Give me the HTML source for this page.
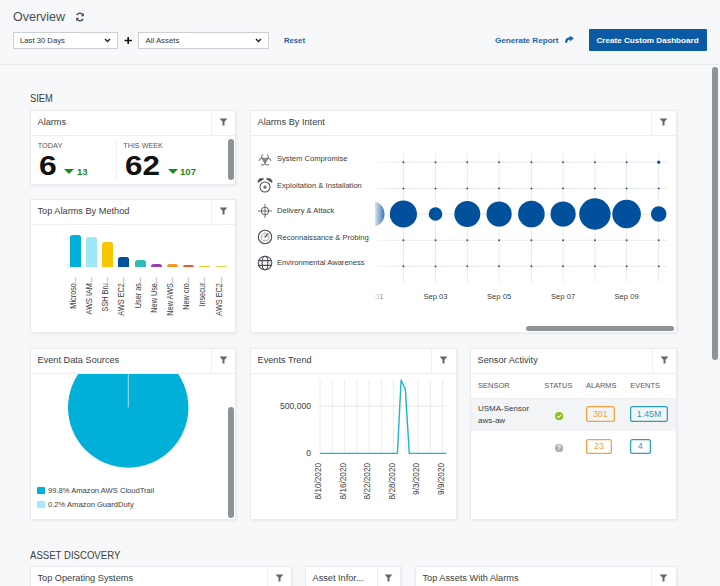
<!DOCTYPE html><html><head><meta charset="utf-8"><style>
html,body{margin:0;padding:0;}
body{width:720px;height:586px;overflow:hidden;position:relative;background:#f7f8fa;font-family:"Liberation Sans",sans-serif;}
.t{position:absolute;white-space:nowrap;line-height:1em;}
svg{display:block}
</style></head><body>
<div style="position:absolute;left:0px;top:64px;width:720px;height:1px;background:#e7e9ec;"></div>
<div class="t" style="left:13px;top:10.97px;font-size:12.5px;font-weight:400;color:#4a4d52;">Overview</div>
<svg style="position:absolute;left:75px;top:12px" width="10" height="10" viewBox="0 0 10 10"><path d="M8.2 3.6 A3.5 3.5 0 0 0 1.8 3.2" fill="none" stroke="#50555b" stroke-width="1.5"/><path d="M8.9 1 V4.2 H5.8 Z" fill="#50555b"/><path d="M1.8 6.4 A3.5 3.5 0 0 0 8.2 6.8" fill="none" stroke="#50555b" stroke-width="1.5"/><path d="M1.1 9 V5.8 H4.2 Z" fill="#50555b"/></svg>
<div style="position:absolute;left:13px;top:32px;width:105px;height:17px;background:#fff;border:1px solid #ccd0d4;box-sizing:border-box;"></div>
<div class="t" style="left:20px;top:36.60px;font-size:7.7px;font-weight:400;color:#333;">Last 30 Days</div>
<div style="position:absolute;left:104px;top:37.8px;line-height:0"><svg width="7" height="5" viewBox="0 0 7 5"><path d="M1 1 L3.5 3.6 L6 1" fill="none" stroke="#222" stroke-width="1.4"/></svg></div>
<svg style="position:absolute;left:124px;top:36px" width="9" height="9" viewBox="0 0 9 9"><path d="M0.6 4.5 H7.9 M4.2 1 V8" stroke="#111" stroke-width="1.6"/></svg>
<div style="position:absolute;left:138px;top:32px;width:131px;height:17px;background:#fff;border:1px solid #ccd0d4;box-sizing:border-box;"></div>
<div class="t" style="left:145.5px;top:36.59px;font-size:7.8px;font-weight:400;color:#333;">All Assets</div>
<div style="position:absolute;left:255.2px;top:37.8px;line-height:0"><svg width="7" height="5" viewBox="0 0 7 5"><path d="M1 1 L3.5 3.6 L6 1" fill="none" stroke="#222" stroke-width="1.4"/></svg></div>
<div class="t" style="left:284px;top:36.90px;font-size:7.7px;font-weight:700;color:#1d62a8;">Reset</div>
<div class="t" style="left:495px;top:36.85px;font-size:8.1px;font-weight:700;color:#1d62a8;">Generate Report</div>
<svg style="position:absolute;left:564px;top:34px" width="11" height="10" viewBox="0 0 11 10"><path d="M2.2 8.8 C2.1 5.6 3.6 4.4 6.4 4.4" fill="none" stroke="#1d62a8" stroke-width="2.3"/><path d="M5.8 1.4 L9.8 4.4 L5.8 7.4 Z" fill="#1d62a8"/></svg>
<div style="position:absolute;left:589px;top:29px;width:118px;height:22px;background:#0b5aa5;border-radius:1px;"></div>
<div class="t" style="left:596.5px;top:36.55px;font-size:8.1px;font-weight:700;color:#fff;">Create Custom Dashboard</div>
<div style="position:absolute;left:712px;top:67px;width:6px;height:293px;background:#8e939a;border-radius:3px;"></div>
<div class="t" style="left:30px;top:93.67px;font-size:10.2px;font-weight:400;color:#3a3d41;transform:scaleX(0.91);transform-origin:0 0;">SIEM</div>
<div style="position:absolute;left:30px;top:110px;width:206px;height:75px;background:#fff;border:1px solid #e9ebee;box-sizing:border-box;box-shadow:0.5px 0.5px 3px rgba(0,0,0,0.08);"></div>
<div style="position:absolute;left:31px;top:135px;width:204px;height:1px;background:#eceef1;"></div>
<div style="position:absolute;left:211px;top:111px;width:1px;height:24px;background:#eceef1;"></div>
<div class="t" style="left:37.5px;top:117.90px;font-size:9.2px;font-weight:400;color:#3a3d41;">Alarms</div>
<div style="position:absolute;left:218.6px;top:117.6px;width:9px;height:8px;line-height:0"><svg width="9" height="8" viewBox="0 0 9 8"><path d="M0.6 0.4 H8.4 L5.5 3.8 V7.4 H3.5 V3.8 Z" fill="#60666d"/></svg></div>
<div class="t" style="left:37.8px;top:141.55px;font-size:7.3px;font-weight:400;color:#55595e;">TODAY</div>
<div class="t" style="left:38.6px;top:152.69px;font-size:27px;font-weight:700;color:#111;transform:scaleX(1.18);transform-origin:0 0;">6</div>
<svg style="position:absolute;left:63.5px;top:169px" width="10" height="5" viewBox="0 0 10 5"><path d="M0 0 H10 L5 5 Z" fill="#1c8a24"/></svg>
<div class="t" style="left:77px;top:166.75px;font-size:9.6px;font-weight:700;color:#1c8a24;">13</div>
<div style="position:absolute;left:116px;top:140px;width:1px;height:40px;background:#eceef1;"></div>
<div class="t" style="left:123.3px;top:141.56px;font-size:7.2px;font-weight:400;color:#55595e;">THIS WEEK</div>
<div class="t" style="left:124.5px;top:152.69px;font-size:27px;font-weight:700;color:#111;transform:scaleX(1.16);transform-origin:0 0;">62</div>
<svg style="position:absolute;left:167.5px;top:169px" width="10" height="5" viewBox="0 0 10 5"><path d="M0 0 H10 L5 5 Z" fill="#1c8a24"/></svg>
<div class="t" style="left:180px;top:166.75px;font-size:9.6px;font-weight:700;color:#1c8a24;">107</div>
<div style="position:absolute;left:228px;top:138.5px;width:6px;height:41.0px;background:#8e939a;border-radius:3px;"></div>
<div style="position:absolute;left:30px;top:199.4px;width:206px;height:133.6px;background:#fff;border:1px solid #e9ebee;box-sizing:border-box;box-shadow:0.5px 0.5px 3px rgba(0,0,0,0.08);"></div>
<div style="position:absolute;left:31px;top:224.4px;width:204px;height:1.0px;background:#eceef1;"></div>
<div style="position:absolute;left:211px;top:200.4px;width:1px;height:24.0px;background:#eceef1;"></div>
<div class="t" style="left:37.5px;top:207.30px;font-size:9.2px;font-weight:400;color:#3a3d41;">Top Alarms By Method</div>
<div style="position:absolute;left:218.6px;top:207.0px;width:9px;height:8px;line-height:0"><svg width="9" height="8" viewBox="0 0 9 8"><path d="M0.6 0.4 H8.4 L5.5 3.8 V7.4 H3.5 V3.8 Z" fill="#60666d"/></svg></div>
<div style="position:absolute;left:70px;top:235px;width:11px;height:32px;background:#00b1db;border-radius:2.5px 2.5px 0 0;"></div>
<div class="t" style="left:69px;top:337px;width:60px;text-align:right;font-size:7.3px;color:#3a3d41;transform:rotate(-90deg) scaleY(1.12);transform-origin:0 0;">Microso...</div>
<div style="position:absolute;left:86px;top:236.7px;width:11px;height:30.30000000000001px;background:#9ee7fa;border-radius:2.5px 2.5px 0 0;"></div>
<div class="t" style="left:85px;top:337px;width:60px;text-align:right;font-size:7.3px;color:#3a3d41;transform:rotate(-90deg) scaleY(1.12);transform-origin:0 0;">AWS IAM...</div>
<div style="position:absolute;left:102px;top:242px;width:11px;height:25px;background:#f6c700;border-radius:2.5px 2.5px 0 0;"></div>
<div class="t" style="left:101px;top:337px;width:60px;text-align:right;font-size:7.3px;color:#3a3d41;transform:rotate(-90deg) scaleY(1.12);transform-origin:0 0;">SSH Bru...</div>
<div style="position:absolute;left:118.3px;top:256.7px;width:11.000000000000014px;height:10.300000000000011px;background:#00529b;border-radius:2.5px 2.5px 0 0;"></div>
<div class="t" style="left:117.3px;top:337px;width:60px;text-align:right;font-size:7.3px;color:#3a3d41;transform:rotate(-90deg) scaleY(1.12);transform-origin:0 0;">AWS EC2...</div>
<div style="position:absolute;left:134.5px;top:260px;width:11.0px;height:7px;background:#2dbdb6;border-radius:2.5px 2.5px 0 0;"></div>
<div class="t" style="left:133.5px;top:337px;width:60px;text-align:right;font-size:7.3px;color:#3a3d41;transform:rotate(-90deg) scaleY(1.12);transform-origin:0 0;">User as...</div>
<div style="position:absolute;left:150.7px;top:263.8px;width:11.0px;height:3.1999999999999886px;background:#9b3fb0;border-radius:2.5px 2.5px 0 0;"></div>
<div class="t" style="left:149.7px;top:337px;width:60px;text-align:right;font-size:7.3px;color:#3a3d41;transform:rotate(-90deg) scaleY(1.12);transform-origin:0 0;">New Use...</div>
<div style="position:absolute;left:167px;top:264px;width:11px;height:3px;background:#f39a1e;border-radius:2.5px 2.5px 0 0;"></div>
<div class="t" style="left:166px;top:337px;width:60px;text-align:right;font-size:7.3px;color:#3a3d41;transform:rotate(-90deg) scaleY(1.12);transform-origin:0 0;">New AWS...</div>
<div style="position:absolute;left:183.2px;top:265px;width:11.0px;height:2px;background:#e75c2b;border-radius:2.5px 2.5px 0 0;"></div>
<div class="t" style="left:182.2px;top:337px;width:60px;text-align:right;font-size:7.3px;color:#3a3d41;transform:rotate(-90deg) scaleY(1.12);transform-origin:0 0;">New cro...</div>
<div style="position:absolute;left:199.4px;top:265.6px;width:11.0px;height:1.3999999999999773px;background:#f6c31c;border-radius:2.5px 2.5px 0 0;"></div>
<div class="t" style="left:198.4px;top:337px;width:60px;text-align:right;font-size:7.3px;color:#3a3d41;transform:rotate(-90deg) scaleY(1.12);transform-origin:0 0;">Insecur...</div>
<div style="position:absolute;left:215.6px;top:266px;width:11.0px;height:1px;background:#d8e14a;border-radius:2.5px 2.5px 0 0;"></div>
<div class="t" style="left:214.6px;top:337px;width:60px;text-align:right;font-size:7.3px;color:#3a3d41;transform:rotate(-90deg) scaleY(1.12);transform-origin:0 0;">AWS EC2...</div>
<div style="position:absolute;left:250px;top:110px;width:427px;height:223px;background:#fff;border:1px solid #e9ebee;box-sizing:border-box;box-shadow:0.5px 0.5px 3px rgba(0,0,0,0.08);"></div>
<div style="position:absolute;left:251px;top:135px;width:425px;height:1px;background:#eceef1;"></div>
<div style="position:absolute;left:651px;top:111px;width:1px;height:24px;background:#eceef1;"></div>
<div class="t" style="left:257.5px;top:117.90px;font-size:9.2px;font-weight:400;color:#3a3d41;">Alarms By Intent</div>
<div style="position:absolute;left:659.1px;top:117.6px;width:9px;height:8px;line-height:0"><svg width="9" height="8" viewBox="0 0 9 8"><path d="M0.6 0.4 H8.4 L5.5 3.8 V7.4 H3.5 V3.8 Z" fill="#60666d"/></svg></div>
<div class="t" style="left:277px;top:155.21px;font-size:7.6px;font-weight:400;color:#3a3d41;">System Compromise</div>
<div class="t" style="left:277px;top:181.51px;font-size:7.6px;font-weight:400;color:#3a3d41;">Exploitation &amp; Installation</div>
<div class="t" style="left:277px;top:207.31px;font-size:7.6px;font-weight:400;color:#3a3d41;">Delivery &amp; Attack</div>
<div class="t" style="left:277px;top:233.61px;font-size:7.6px;font-weight:400;color:#3a3d41;">Reconnaissance &amp; Probing</div>
<div class="t" style="left:277px;top:259.11px;font-size:7.6px;font-weight:400;color:#3a3d41;">Environmental Awareness</div>
<div style="position:absolute;left:256.5px;top:150.9px;line-height:0"><svg width="16" height="16" viewBox="0 0 16 16"><path d="M10.09 3.32 A3.4 3.4 0 1 1 5.91 3.32 M11.87 13.65 A3.4 3.4 0 1 1 13.96 10.03 M2.04 10.03 A3.4 3.4 0 1 1 4.13 13.65" fill="none" stroke="#4a4e54" stroke-width="1.1" opacity="0.72"/><circle cx="8" cy="9" r="1.9" fill="none" stroke="#4a4e54" stroke-width="0.7" opacity="0.6"/></svg></div>
<div style="position:absolute;left:256.5px;top:177.20000000000002px;line-height:0"><svg width="16" height="16" viewBox="0 0 16 16"><g fill="none" stroke="#4a4e54" stroke-width="1.05"><circle cx="8" cy="10" r="5"/><circle cx="8" cy="10" r="1.1"/></g><path d="M1.1 5.4 C0.6 2.4 3.4 0.7 6.6 1.9 Z M14.9 5.4 C15.4 2.4 12.6 0.7 9.4 1.9 Z" fill="#4a4e54" stroke="#4a4e54" stroke-width="0.8" stroke-linejoin="round"/></svg></div>
<div style="position:absolute;left:256.5px;top:203.0px;line-height:0"><svg width="16" height="16" viewBox="0 0 16 16"><g fill="none" stroke="#4a4e54" stroke-width="0.9"><circle cx="8" cy="8" r="3.8"/><path d="M8 1 V15 M1 8 H15" opacity="0.85"/></g></svg></div>
<div style="position:absolute;left:256.5px;top:229.3px;line-height:0"><svg width="16" height="16" viewBox="0 0 16 16"><g fill="none" stroke="#4a4e54"><circle cx="8" cy="8" r="6.7" stroke-width="1.1"/><circle cx="8" cy="8" r="4" stroke-width="0.6" opacity="0.6"/><path d="M8 8 L11.2 4.6" stroke-width="1.2"/><path d="M3 8 H13 M8 3 V13" stroke-width="0.5" opacity="0.4"/></g></svg></div>
<div style="position:absolute;left:256.5px;top:254.8px;line-height:0"><svg width="16" height="16" viewBox="0 0 16 16"><g fill="none" stroke="#4a4e54" stroke-width="1.1"><circle cx="8" cy="8" r="6.8"/><ellipse cx="8" cy="8" rx="2.9" ry="6.8"/><path d="M1.4 5.6 H14.6 M1.4 10.4 H14.6"/></g></svg></div>
<div style="position:absolute;left:0;top:0;width:720px;height:586px;clip-path:inset(136px 50px 260px 375px);"><svg style="position:absolute;left:0;top:0" width="720" height="586" viewBox="0 0 720 586"><line x1="372" y1="162.2" x2="667" y2="162.2" stroke="#e9eaec" stroke-width="1"/><line x1="372" y1="188.5" x2="667" y2="188.5" stroke="#e9eaec" stroke-width="1"/><line x1="372" y1="214" x2="667" y2="214" stroke="#e9eaec" stroke-width="1"/><line x1="372" y1="240.3" x2="667" y2="240.3" stroke="#e9eaec" stroke-width="1"/><line x1="372" y1="266.3" x2="667" y2="266.3" stroke="#e9eaec" stroke-width="1"/><line x1="371.5" y1="153.5" x2="371.5" y2="282" stroke="#e9eaec" stroke-width="1"/><circle cx="371.5" cy="162.2" r="0.95" fill="#2a5486"/><circle cx="371.5" cy="188.5" r="0.95" fill="#2a5486"/><circle cx="371.5" cy="240.3" r="0.95" fill="#2a5486"/><circle cx="371.5" cy="266.3" r="0.95" fill="#2a5486"/><line x1="403.4" y1="153.5" x2="403.4" y2="282" stroke="#e9eaec" stroke-width="1"/><circle cx="403.4" cy="162.2" r="0.95" fill="#2a5486"/><circle cx="403.4" cy="188.5" r="0.95" fill="#2a5486"/><circle cx="403.4" cy="240.3" r="0.95" fill="#2a5486"/><circle cx="403.4" cy="266.3" r="0.95" fill="#2a5486"/><line x1="435.5" y1="153.5" x2="435.5" y2="282" stroke="#e9eaec" stroke-width="1"/><circle cx="435.5" cy="162.2" r="0.95" fill="#2a5486"/><circle cx="435.5" cy="188.5" r="0.95" fill="#2a5486"/><circle cx="435.5" cy="240.3" r="0.95" fill="#2a5486"/><circle cx="435.5" cy="266.3" r="0.95" fill="#2a5486"/><line x1="467.3" y1="153.5" x2="467.3" y2="282" stroke="#e9eaec" stroke-width="1"/><circle cx="467.3" cy="162.2" r="0.95" fill="#2a5486"/><circle cx="467.3" cy="188.5" r="0.95" fill="#2a5486"/><circle cx="467.3" cy="240.3" r="0.95" fill="#2a5486"/><circle cx="467.3" cy="266.3" r="0.95" fill="#2a5486"/><line x1="499.1" y1="153.5" x2="499.1" y2="282" stroke="#e9eaec" stroke-width="1"/><circle cx="499.1" cy="162.2" r="0.95" fill="#2a5486"/><circle cx="499.1" cy="188.5" r="0.95" fill="#2a5486"/><circle cx="499.1" cy="240.3" r="0.95" fill="#2a5486"/><circle cx="499.1" cy="266.3" r="0.95" fill="#2a5486"/><line x1="531.4" y1="153.5" x2="531.4" y2="282" stroke="#e9eaec" stroke-width="1"/><circle cx="531.4" cy="162.2" r="0.95" fill="#2a5486"/><circle cx="531.4" cy="188.5" r="0.95" fill="#2a5486"/><circle cx="531.4" cy="240.3" r="0.95" fill="#2a5486"/><circle cx="531.4" cy="266.3" r="0.95" fill="#2a5486"/><line x1="563.1" y1="153.5" x2="563.1" y2="282" stroke="#e9eaec" stroke-width="1"/><circle cx="563.1" cy="162.2" r="0.95" fill="#2a5486"/><circle cx="563.1" cy="188.5" r="0.95" fill="#2a5486"/><circle cx="563.1" cy="240.3" r="0.95" fill="#2a5486"/><circle cx="563.1" cy="266.3" r="0.95" fill="#2a5486"/><line x1="594.9" y1="153.5" x2="594.9" y2="282" stroke="#e9eaec" stroke-width="1"/><circle cx="594.9" cy="162.2" r="0.95" fill="#2a5486"/><circle cx="594.9" cy="188.5" r="0.95" fill="#2a5486"/><circle cx="594.9" cy="240.3" r="0.95" fill="#2a5486"/><circle cx="594.9" cy="266.3" r="0.95" fill="#2a5486"/><line x1="626.6" y1="153.5" x2="626.6" y2="282" stroke="#e9eaec" stroke-width="1"/><circle cx="626.6" cy="162.2" r="0.95" fill="#2a5486"/><circle cx="626.6" cy="188.5" r="0.95" fill="#2a5486"/><circle cx="626.6" cy="240.3" r="0.95" fill="#2a5486"/><circle cx="626.6" cy="266.3" r="0.95" fill="#2a5486"/><line x1="658.7" y1="153.5" x2="658.7" y2="282" stroke="#e9eaec" stroke-width="1"/><circle cx="658.7" cy="162.2" r="0.95" fill="#2a5486"/><circle cx="658.7" cy="188.5" r="0.95" fill="#2a5486"/><circle cx="658.7" cy="240.3" r="0.95" fill="#2a5486"/><circle cx="658.7" cy="266.3" r="0.95" fill="#2a5486"/><circle cx="658.7" cy="162.2" r="1.6" fill="#0b4f9c"/><circle cx="371.5" cy="214" r="13" fill="#00509b"/><circle cx="403.4" cy="214" r="13.6" fill="#00509b"/><circle cx="435.5" cy="214" r="6.8" fill="#00509b"/><circle cx="467.3" cy="214" r="13" fill="#00509b"/><circle cx="499.1" cy="214" r="12.6" fill="#00509b"/><circle cx="531.4" cy="214" r="13.3" fill="#00509b"/><circle cx="563.1" cy="214" r="12.6" fill="#00509b"/><circle cx="594.9" cy="214" r="15.7" fill="#00509b"/><circle cx="626.6" cy="214" r="14.3" fill="#00509b"/><circle cx="658.7" cy="214" r="7.8" fill="#00509b"/><text x="371.5" y="299" font-size="7.6" font-family="Liberation Sans" fill="#3a3d41" text-anchor="middle">Sep 01</text><text x="435.5" y="299" font-size="7.6" font-family="Liberation Sans" fill="#3a3d41" text-anchor="middle">Sep 03</text><text x="499.1" y="299" font-size="7.6" font-family="Liberation Sans" fill="#3a3d41" text-anchor="middle">Sep 05</text><text x="563.1" y="299" font-size="7.6" font-family="Liberation Sans" fill="#3a3d41" text-anchor="middle">Sep 07</text><text x="626.6" y="299" font-size="7.6" font-family="Liberation Sans" fill="#3a3d41" text-anchor="middle">Sep 09</text></svg></div>
<div style="position:absolute;left:375px;top:150px;width:20px;height:150px;background:linear-gradient(to right,rgba(255,255,255,0.85) 0,rgba(255,255,255,0) 13px);"></div>
<div style="position:absolute;left:525.5px;top:325.5px;width:148.5px;height:5.0px;background:#8e939a;border-radius:3px;"></div>
<div style="position:absolute;left:30px;top:348px;width:206px;height:172px;background:#fff;border:1px solid #e9ebee;box-sizing:border-box;box-shadow:0.5px 0.5px 3px rgba(0,0,0,0.08);"></div>
<div style="position:absolute;left:31px;top:373px;width:204px;height:1px;background:#eceef1;"></div>
<div style="position:absolute;left:211px;top:349px;width:1px;height:24px;background:#eceef1;"></div>
<div class="t" style="left:37.5px;top:355.90px;font-size:9.2px;font-weight:400;color:#3a3d41;">Event Data Sources</div>
<div style="position:absolute;left:218.6px;top:355.6px;width:9px;height:8px;line-height:0"><svg width="9" height="8" viewBox="0 0 9 8"><path d="M0.6 0.4 H8.4 L5.5 3.8 V7.4 H3.5 V3.8 Z" fill="#60666d"/></svg></div>
<div style="position:absolute;left:31px;top:374px;width:204px;height:145px;overflow:hidden"><svg style="position:absolute;left:0;top:0" width="204" height="145"><circle cx="97.2" cy="33.5" r="60.2" fill="#00b0d9"/><line x1="97.3" y1="-30" x2="97.3" y2="33.4" stroke="#c8f0fa" stroke-width="0.8"/></svg></div>
<div style="position:absolute;left:37.3px;top:486.8px;width:7.300000000000004px;height:7.199999999999989px;background:#00b0d9;border-radius:1px;"></div>
<div class="t" style="left:48px;top:486.61px;font-size:7.6px;font-weight:400;color:#3a3d41;">99.8% Amazon AWS CloudTrail</div>
<div style="position:absolute;left:37.3px;top:501.2px;width:7.300000000000004px;height:6.800000000000011px;background:#a6e8fb;border-radius:1px;"></div>
<div class="t" style="left:48px;top:501.01px;font-size:7.6px;font-weight:400;color:#3a3d41;">0.2% Amazon GuardDuty</div>
<div style="position:absolute;left:228px;top:406.5px;width:6px;height:111.0px;background:#8e939a;border-radius:3px;"></div>
<div style="position:absolute;left:250px;top:348px;width:207px;height:172px;background:#fff;border:1px solid #e9ebee;box-sizing:border-box;box-shadow:0.5px 0.5px 3px rgba(0,0,0,0.08);"></div>
<div style="position:absolute;left:251px;top:373px;width:205px;height:1px;background:#eceef1;"></div>
<div style="position:absolute;left:431px;top:349px;width:1px;height:24px;background:#eceef1;"></div>
<div class="t" style="left:257.5px;top:355.90px;font-size:9.2px;font-weight:400;color:#3a3d41;">Events Trend</div>
<div style="position:absolute;left:439.1px;top:355.6px;width:9px;height:8px;line-height:0"><svg width="9" height="8" viewBox="0 0 9 8"><path d="M0.6 0.4 H8.4 L5.5 3.8 V7.4 H3.5 V3.8 Z" fill="#60666d"/></svg></div>
<svg style="position:absolute;left:0;top:0" width="720" height="586"><line x1="320.1" y1="380" x2="320.1" y2="454" stroke="#eaecef" stroke-width="1"/><line x1="332.35" y1="380" x2="332.35" y2="454" stroke="#eaecef" stroke-width="1"/><line x1="344.6" y1="380" x2="344.6" y2="454" stroke="#eaecef" stroke-width="1"/><line x1="356.85" y1="380" x2="356.85" y2="454" stroke="#eaecef" stroke-width="1"/><line x1="369.1" y1="380" x2="369.1" y2="454" stroke="#eaecef" stroke-width="1"/><line x1="381.35" y1="380" x2="381.35" y2="454" stroke="#eaecef" stroke-width="1"/><line x1="393.6" y1="380" x2="393.6" y2="454" stroke="#eaecef" stroke-width="1"/><line x1="405.85" y1="380" x2="405.85" y2="454" stroke="#eaecef" stroke-width="1"/><line x1="418.1" y1="380" x2="418.1" y2="454" stroke="#eaecef" stroke-width="1"/><line x1="430.35" y1="380" x2="430.35" y2="454" stroke="#eaecef" stroke-width="1"/><line x1="442.6" y1="380" x2="442.6" y2="454" stroke="#eaecef" stroke-width="1"/><line x1="320" y1="406.1" x2="446.5" y2="406.1" stroke="#e6e8eb" stroke-width="1"/><polyline points="320.1,453.4 397.4,453.4 401.1,380 405.4,389.8 409.3,453.4 446.3,453.4" fill="none" stroke="#1fb3d6" stroke-width="1.4" stroke-linejoin="round"/><text x="311" y="409" font-size="8.6" font-family="Liberation Sans" fill="#3a3d41" text-anchor="end">500,000</text><text x="311" y="456" font-size="8.6" font-family="Liberation Sans" fill="#3a3d41" text-anchor="end">0</text></svg>
<div class="t" style="left:314.1px;top:523px;width:60px;text-align:right;font-size:8.2px;color:#3a3d41;transform:rotate(-90deg) scaleY(1.12);transform-origin:0 0;">8/10/2020</div>
<div class="t" style="left:338.6px;top:523px;width:60px;text-align:right;font-size:8.2px;color:#3a3d41;transform:rotate(-90deg) scaleY(1.12);transform-origin:0 0;">8/16/2020</div>
<div class="t" style="left:363.1px;top:523px;width:60px;text-align:right;font-size:8.2px;color:#3a3d41;transform:rotate(-90deg) scaleY(1.12);transform-origin:0 0;">8/22/2020</div>
<div class="t" style="left:387.6px;top:523px;width:60px;text-align:right;font-size:8.2px;color:#3a3d41;transform:rotate(-90deg) scaleY(1.12);transform-origin:0 0;">8/28/2020</div>
<div class="t" style="left:412.1px;top:523px;width:60px;text-align:right;font-size:8.2px;color:#3a3d41;transform:rotate(-90deg) scaleY(1.12);transform-origin:0 0;">9/3/2020</div>
<div class="t" style="left:436.6px;top:523px;width:60px;text-align:right;font-size:8.2px;color:#3a3d41;transform:rotate(-90deg) scaleY(1.12);transform-origin:0 0;">9/9/2020</div>
<div style="position:absolute;left:470px;top:348px;width:207px;height:172px;background:#fff;border:1px solid #e9ebee;box-sizing:border-box;box-shadow:0.5px 0.5px 3px rgba(0,0,0,0.08);"></div>
<div style="position:absolute;left:471px;top:373px;width:205px;height:1px;background:#eceef1;"></div>
<div style="position:absolute;left:652px;top:349px;width:1px;height:24px;background:#eceef1;"></div>
<div class="t" style="left:477.5px;top:355.90px;font-size:9.2px;font-weight:400;color:#3a3d41;">Sensor Activity</div>
<div style="position:absolute;left:659.6px;top:355.6px;width:9px;height:8px;line-height:0"><svg width="9" height="8" viewBox="0 0 9 8"><path d="M0.6 0.4 H8.4 L5.5 3.8 V7.4 H3.5 V3.8 Z" fill="#60666d"/></svg></div>
<div class="t" style="left:478px;top:381.62px;font-size:7.5px;font-weight:400;color:#55595e;">SENSOR</div>
<div class="t" style="left:544.3px;top:381.64px;font-size:7.4px;font-weight:400;color:#55595e;">STATUS</div>
<div class="t" style="left:586px;top:381.64px;font-size:7.4px;font-weight:400;color:#55595e;">ALARMS</div>
<div class="t" style="left:630.3px;top:381.64px;font-size:7.4px;font-weight:400;color:#55595e;">EVENTS</div>
<div style="position:absolute;left:471px;top:397.5px;width:205px;height:1.0px;background:#eceef1;"></div>
<div style="position:absolute;left:471px;top:398.5px;width:205px;height:32.0px;background:#f3f4f6;"></div>
<div class="t" style="left:478px;top:404.56px;font-size:8px;font-weight:400;color:#3a3d41;">USMA-Sensor</div>
<div class="t" style="left:478px;top:417.26px;font-size:8px;font-weight:400;color:#3a3d41;">aws-aw</div>
<svg style="position:absolute;left:554.8px;top:411.7px" width="8.2" height="8.2" viewBox="0 0 8 8"><circle cx="4" cy="4" r="4" fill="#8cc21f"/><path d="M2.1 4.1 L3.5 5.4 L6 2.8" fill="none" stroke="#fff" stroke-width="1.1"/></svg>
<svg style="position:absolute;left:554.8px;top:444px" width="8.2" height="8.2" viewBox="0 0 8 8"><circle cx="4" cy="4" r="4" fill="#a9adb2"/><text x="4" y="6.3" font-size="6.5" font-weight="700" font-family="Liberation Sans" fill="#fff" text-anchor="middle">?</text></svg>
<div style="position:absolute;left:586px;top:406.4px;width:28.600000000000023px;height:16.100000000000023px;box-shadow:inset 0 0 0 1.25px #f2a23c;border-radius:2.5px;box-sizing:border-box;color:#f2a23c;font-size:8.8px;line-height:16.100000000000023px;text-align:center;">301</div>
<div style="position:absolute;left:629.8px;top:406.4px;width:38.5px;height:16.100000000000023px;box-shadow:inset 0 0 0 1.25px #2a9fc0;border-radius:2.5px;box-sizing:border-box;color:#2a9fc0;font-size:8.8px;line-height:16.100000000000023px;text-align:center;">1.45M</div>
<div style="position:absolute;left:586px;top:439.1px;width:26px;height:15.399999999999977px;box-shadow:inset 0 0 0 1.25px #f2a23c;border-radius:2.5px;box-sizing:border-box;color:#f2a23c;font-size:8.8px;line-height:15.399999999999977px;text-align:center;">23</div>
<div style="position:absolute;left:629.8px;top:439.1px;width:21.0px;height:15.399999999999977px;box-shadow:inset 0 0 0 1.25px #2a9fc0;border-radius:2.5px;box-sizing:border-box;color:#2a9fc0;font-size:8.8px;line-height:15.399999999999977px;text-align:center;">4</div>
<div class="t" style="left:30px;top:550.50px;font-size:10px;font-weight:400;color:#3a3d41;transform:scaleX(0.96);transform-origin:0 0;">ASSET DISCOVERY</div>
<div style="position:absolute;left:30px;top:566px;width:262px;height:34px;background:#fff;border:1px solid #e9ebee;box-sizing:border-box;box-shadow:0.5px 0.5px 3px rgba(0,0,0,0.08);"></div>
<div style="position:absolute;left:31px;top:591px;width:260px;height:1px;background:#eceef1;"></div>
<div style="position:absolute;left:267px;top:567px;width:1px;height:24px;background:#eceef1;"></div>
<div class="t" style="left:37.5px;top:573.90px;font-size:9.2px;font-weight:400;color:#3a3d41;">Top Operating Systems</div>
<div style="position:absolute;left:274.6px;top:573.6px;width:9px;height:8px;line-height:0"><svg width="9" height="8" viewBox="0 0 9 8"><path d="M0.6 0.4 H8.4 L5.5 3.8 V7.4 H3.5 V3.8 Z" fill="#60666d"/></svg></div>
<div style="position:absolute;left:305px;top:566px;width:96px;height:34px;background:#fff;border:1px solid #e9ebee;box-sizing:border-box;box-shadow:0.5px 0.5px 3px rgba(0,0,0,0.08);"></div>
<div style="position:absolute;left:306px;top:591px;width:94px;height:1px;background:#eceef1;"></div>
<div style="position:absolute;left:377px;top:567px;width:1px;height:24px;background:#eceef1;"></div>
<div class="t" style="left:312.5px;top:573.90px;font-size:9.2px;font-weight:400;color:#3a3d41;">Asset Infor...</div>
<div style="position:absolute;left:384.1px;top:573.6px;width:9px;height:8px;line-height:0"><svg width="9" height="8" viewBox="0 0 9 8"><path d="M0.6 0.4 H8.4 L5.5 3.8 V7.4 H3.5 V3.8 Z" fill="#60666d"/></svg></div>
<div style="position:absolute;left:415px;top:566px;width:262px;height:34px;background:#fff;border:1px solid #e9ebee;box-sizing:border-box;box-shadow:0.5px 0.5px 3px rgba(0,0,0,0.08);"></div>
<div style="position:absolute;left:416px;top:591px;width:260px;height:1px;background:#eceef1;"></div>
<div style="position:absolute;left:651px;top:567px;width:1px;height:24px;background:#eceef1;"></div>
<div class="t" style="left:422.5px;top:573.90px;font-size:9.2px;font-weight:400;color:#3a3d41;">Top Assets With Alarms</div>
<div style="position:absolute;left:659.1px;top:573.6px;width:9px;height:8px;line-height:0"><svg width="9" height="8" viewBox="0 0 9 8"><path d="M0.6 0.4 H8.4 L5.5 3.8 V7.4 H3.5 V3.8 Z" fill="#60666d"/></svg></div>
</body></html>
